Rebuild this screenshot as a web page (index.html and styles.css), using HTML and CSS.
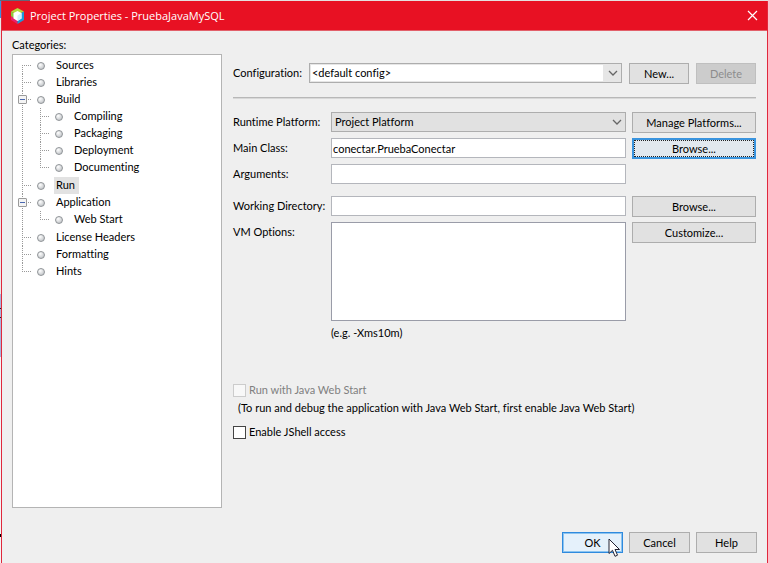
FILE: index.html
```html
<!DOCTYPE html>
<html lang="en">

<head>
    <meta charset="UTF-8">
    <meta name="viewport" content="width=device-width, initial-scale=1.0">
    <title>Project Properties - PruebaJavaMySQL</title>
    <link rel="stylesheet" href="styles.css">
</head>

<body>
    <div class="dialog">
        <header class="titlebar">
            <svg class="logo" width="15" height="16" viewBox="0 0 15 16">
                <path d="M7.500 0 14 3.500 7.500 7 1 3.500Z" fill="#b4dc3c" />
                <path d="M1 3.500 7.500 7V16L1 12Z" fill="#e8206c" />
                <path d="M1 3.500 4 5V10L1 8Z" fill="#8cc83c" />
                <path d="M14 3.500 7.500 7V16L14 12Z" fill="#1c9ad8" />
                <path d="M3.500 5 7.500 3 11.500 5V10.500L7.500 13 3.500 10.500Z" fill="#fff" />
                <path d="M7.500 7.500 11.500 5V10.500L7.500 13Z" fill="#d4eefa" />
            </svg>
            <h1>Project Properties - PruebaJavaMySQL</h1>
            <button class="close" type="button" aria-label="Close">
                <svg width="11" height="11" viewBox="0 0 11 11">
                    <path d="M1 1 10 10M10 1 1 10" stroke="#fff" stroke-width="1.200" />
                </svg>
            </button>
        </header>

        <main class="content">
            <nav class="sidebar">
                <h2 id="categories">Categories:</h2>
                <div class="tree-box">
                    <ul class="tree" aria-labelledby="categories">
                        <li><div class="node"><i class="dot"></i><span>Sources</span></div></li>
                        <li><div class="node"><i class="dot"></i><span>Libraries</span></div></li>
                        <li>
                            <div class="node"><button class="toggle" type="button" aria-label="Collapse Build"></button><i class="dot"></i><span>Build</span></div>
                            <ul>
                                <li><div class="node"><i class="dot"></i><span>Compiling</span></div></li>
                                <li><div class="node"><i class="dot"></i><span>Packaging</span></div></li>
                                <li><div class="node"><i class="dot"></i><span>Deployment</span></div></li>
                                <li><div class="node"><i class="dot"></i><span>Documenting</span></div></li>
                            </ul>
                        </li>
                        <li><div class="node"><i class="dot"></i><span class="selected">Run</span></div></li>
                        <li>
                            <div class="node"><button class="toggle" type="button" aria-label="Collapse Application"></button><i class="dot"></i><span>Application</span></div>
                            <ul>
                                <li><div class="node"><i class="dot"></i><span>Web Start</span></div></li>
                            </ul>
                        </li>
                        <li><div class="node"><i class="dot"></i><span>License Headers</span></div></li>
                        <li><div class="node"><i class="dot"></i><span>Formatting</span></div></li>
                        <li><div class="node"><i class="dot"></i><span>Hints</span></div></li>
                    </ul>
                </div>
            </nav>

            <form class="panel">
                <div class="config">
                    <label for="config">Configuration:</label>
                    <select id="config" class="combo editable">
                        <option>&lt;default config&gt;</option>
                    </select>
                    <button class="btn" type="button">New...</button>
                    <button class="btn" type="button" disabled>Delete</button>
                </div>

                <hr>

                <div class="fields">
                    <label for="platform">Runtime Platform:</label>
                    <select id="platform" class="combo">
                        <option>Project Platform</option>
                    </select>
                    <button class="btn" type="button">Manage Platforms...</button>

                    <label for="main-class">Main Class:</label>
                    <input id="main-class" type="text" value="conectar.PruebaConectar">
                    <button class="btn focused" type="button">Browse...</button>

                    <label for="arguments">Arguments:</label>
                    <input id="arguments" type="text">
                </div>

                <div class="fields">
                    <label for="directory">Working Directory:</label>
                    <input id="directory" type="text">
                    <button class="btn" type="button">Browse...</button>

                    <label for="vm">VM Options:</label>
                    <textarea id="vm"></textarea>
                    <button class="btn" type="button">Customize...</button>

                    <p class="hint">(e.g. -Xms10m)</p>
                </div>

                <div class="options">
                    <label class="check disabled"><input type="checkbox" disabled>Run with Java Web Start</label>
                    <p class="note">(To run and debug the application with Java Web Start, first enable Java Web Start)</p>
                    <label class="check"><input type="checkbox">Enable JShell access</label>
                </div>
            </form>
        </main>

        <footer class="actions">
            <button class="btn default" type="button">OK
                <svg class="cursor" width="13" height="20" viewBox="0 0 13 20">
                    <path d="M1 1V15.500L4.500 12.300 7 18.300 9.500 17.200 7 11.500H11.500Z" fill="#fff" stroke="#223" />
                </svg>
            </button>
            <button class="btn" type="button">Cancel</button>
            <button class="btn" type="button">Help</button>
        </footer>
    </div>
</body>

</html>
```
FILE: styles.css
```css
* {
    box-sizing: border-box;
}

body {
    margin: 0;
    padding: 1px 0 0 1px;
    /* sliver of the windows behind the dialog */
    background:
        linear-gradient(90deg, #667 0 30px, #e4e0e0 30px) 0 0 / 100% 1px no-repeat,
        linear-gradient(#3c8fe0 0 18px, #e8e8e8 18px 294px, #a9b4dc 294px 308px, #222 308px 309px, #a9b4dc 309px 317px, #222 317px 318px, #a9b4dc 318px 357px, #f4f4f4 357px 534px, #000 534px 537px, #f4f4f4 537px);
    font-family: Lato, "Liberation Sans", sans-serif;
    font-variant-ligatures: none;
    font-size: 11px;
    line-height: 14px;
    color: #000;
}

h1,
h2,
p,
ul {
    margin: 0;
    padding: 0;
    font-size: inherit;
    font-weight: normal;
    list-style: none;
}

button,
input,
select,
textarea {
    margin: 0;
    font: inherit;
    color: inherit;
}

.dialog {
    display: flex;
    flex-direction: column;
    min-height: calc(100vh - 1px);
    border: 1px solid #e0283c;
    border-top: 0;
    border-bottom: 0;
    background: #efefef;
}

.titlebar {
    display: flex;
    align-items: center;
    height: 30px;
    padding: 0 9px 0 8px;
    gap: 5px;
    background: #e81123;
    color: #fff;
    border-bottom: 1px solid #e2606a;
}

.titlebar h1 {
    flex: 1;
    font-family: "Open Sans", "Noto Sans", sans-serif;
}

.close {
    display: flex;
    padding: 0;
    border: 0;
    background: none;
}

.content {
    flex: 1;
    display: flex;
    gap: 11px;
    padding: 7px 11px 0 10px;
}

.sidebar {
    flex: 0 0 210px;
    display: flex;
    flex-direction: column;
    gap: 2px;
}

.tree-box {
    flex: 1;
    padding-top: 2px;
    background: #fff;
    border: 1px solid #b4b4b4;
}

/* tree guides are dotted backgrounds of each item */
.tree li {
    background-image:
        repeating-linear-gradient(#999 0 1px, transparent 1px 2px),
        repeating-linear-gradient(90deg, #999 0 1px, transparent 1px 2px);
    background-size: 1px 100%, 9px 1px;
    background-position: 9px 0, 9px 8px;
    background-repeat: no-repeat;
}

.tree > li:first-child {
    background-position: 9px 8px, 9px 8px;
}

.tree li:last-child {
    background-size: 1px 9px, 9px 1px;
}

.tree ul {
    margin-left: 18px;
    padding-bottom: 1px;
}

.node {
    display: flex;
    align-items: center;
    height: 17px;
    padding-left: 24px;
}

.node span {
    margin-left: 9px;
    padding: 1px 4px 2px 2px;
}

.node .selected {
    background: #e2e2e2;
}

.dot {
    width: 8px;
    height: 8px;
    border: 1px solid #909498;
    border-radius: 50%;
    background: radial-gradient(circle at 35% 30%, #fff, #b4b8bc);
}

.toggle {
    width: 9px;
    height: 9px;
    margin: 0 10px 0 -19px;
    padding: 0;
    border: 1px solid #9a9a9a;
    border-radius: 1px;
    background: linear-gradient(#4a68b0, #4a68b0) center / 5px 1px no-repeat, #f4f4f4;
}

.panel {
    flex: 1;
    min-width: 0;
    padding-top: 25px;
}

.config {
    display: flex;
    align-items: flex-start;
    gap: 7px;
}

.config label,
.fields label {
    line-height: 20px;
    white-space: nowrap;
}

.config .combo {
    flex: 1;
}

.config .btn {
    width: 60px;
}

.btn {
    position: relative;
    height: 21px;
    padding: 0;
    border: 1px solid #adadad;
    background: #e1e1e1;
    text-align: center;
}

.btn:disabled {
    border-color: #bfbfbf;
    background: #cccccc;
    color: #8c8c8c;
}

.btn.focused {
    border: 2px solid #3a94de;
    background: #e2e8ee;
    outline: 1px dotted #222;
    outline-offset: -3px;
}

.btn.default {
    border: 1px solid #2f8ade;
    box-shadow: inset 0 0 0 1px #8cc4f0;
    background: #e5f1fb;
}

.combo {
    appearance: none;
    height: 20px;
    padding: 0 20px 0 3px;
    border: 1px solid #adadad;
    border-radius: 0;
    background: url("data:image/svg+xml,%3Csvg xmlns='http://www.w3.org/2000/svg' width='10' height='6'%3E%3Cpath d='M1 1 5 5 9 1' fill='none' stroke='%23666' stroke-width='1.3'/%3E%3C/svg%3E") right 3px center no-repeat #e1e1e1;
}

.combo.editable {
    padding-left: 2px;
    background:
        url("data:image/svg+xml,%3Csvg xmlns='http://www.w3.org/2000/svg' width='10' height='6'%3E%3Cpath d='M1 1 5 5 9 1' fill='none' stroke='%23666' stroke-width='1.3'/%3E%3C/svg%3E") right 3px center no-repeat,
        linear-gradient(#fff, #fff) 1px 1px / calc(100% - 19px) calc(100% - 2px) no-repeat,
        #e6e6e6;
}

hr {
    height: 2px;
    margin: 13px 0;
    border: 0;
    border-top: 1px solid #b8b8b8;
    border-bottom: 1px solid #d8d8d8;
}

.fields {
    display: grid;
    grid-template-columns: 92px 1fr 124px;
    grid-auto-rows: minmax(21px, auto);
    gap: 5px 6px;
    margin-bottom: 11px;
    align-items: start;
}

.fields input,
.fields textarea {
    width: 100%;
    height: 20px;
    padding: 0 1px;
    border: 1px solid #b4b6bc;
    border-radius: 0;
    background: #fff;
}

.fields textarea {
    display: block;
    height: 99px;
    border-color: #9a9ca8;
    resize: none;
}

.hint {
    grid-column: 2;
}

.options {
    display: flex;
    flex-direction: column;
    align-items: flex-start;
    gap: 4px;
    padding-top: 25px;
}

.check {
    display: flex;
    align-items: center;
    gap: 3px;
}

.check input {
    appearance: none;
    width: 13px;
    height: 13px;
    border: 1px solid #444;
    background: #fff;
}

.check.disabled {
    color: #808080;
}

.check.disabled input {
    border-color: #ccc;
    background: #f8f8f8;
}

.note {
    padding: 0 0 6px 5px;
}

.actions {
    display: flex;
    justify-content: flex-end;
    gap: 6px;
    padding: 24px 10px 10px;
}

.actions .btn {
    width: 61px;
}

/* mouse pointer resting over the OK button */
.cursor {
    position: absolute;
    left: 45px;
    top: 5px;
}
```
